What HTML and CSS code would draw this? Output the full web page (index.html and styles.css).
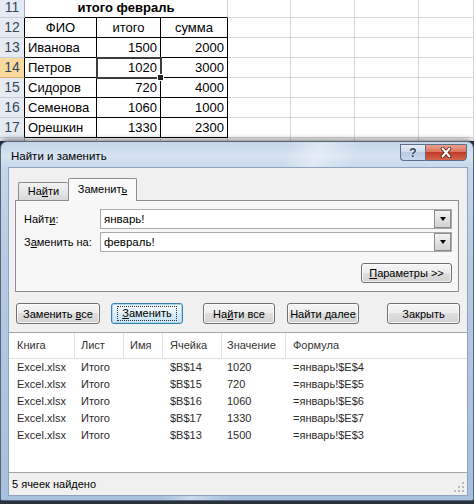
FILE: index.html
```html
<!DOCTYPE html>
<html lang="ru">
<head>
  <meta charset="UTF-8"/>
  <title>Найти и заменить</title>
  <link rel="stylesheet" href="styles.css">
</head>
<body>

<div class="sheet">
  <div class="grid">
    <div class="rh">11</div><div class="head-cell">итого февраль</div><div></div><div></div><div></div><div></div>
    <div class="rh edge">12</div><div class="t c">ФИО</div><div class="t c">итого</div><div class="t c">сумма</div><div></div><div></div><div></div><div></div>
    <div class="rh edge">13</div><div class="t">Иванова</div><div class="t n">1500</div><div class="t n">2000</div><div></div><div></div><div></div><div></div>
    <div class="rh edge active">14</div><div class="t">Петров</div><div class="t n sel">1020</div><div class="t n">3000</div><div></div><div></div><div></div><div></div>
    <div class="rh edge">15</div><div class="t">Сидоров</div><div class="t n">720</div><div class="t n">4000</div><div></div><div></div><div></div><div></div>
    <div class="rh edge">16</div><div class="t">Семенова</div><div class="t n">1060</div><div class="t n">1000</div><div></div><div></div><div></div><div></div>
    <div class="rh edge">17</div><div class="t">Орешкин</div><div class="t n">1330</div><div class="t n">2300</div><div></div><div></div><div></div><div></div>
    <div class="rh"></div><div></div><div></div><div></div><div></div><div></div><div></div><div></div>
  </div>
</div>

<div class="window">
  <div class="titlebar">
    <span class="title">Найти и заменить</span>
    <div class="caption-btns">
      <span class="cap help">?</span>
      <span class="cap close">
        <svg width="14" height="11" viewBox="0 0 14 11">
          <path d="M3.5 1.5 L10.5 9.5 M10.5 1.5 L3.5 9.5" stroke="#5a231a" stroke-width="3.6" stroke-linecap="round"/>
          <path d="M3.5 1.5 L10.5 9.5 M10.5 1.5 L3.5 9.5" stroke="#fff" stroke-width="2" stroke-linecap="round"/>
        </svg>
      </span>
    </div>
  </div>

  <div class="client">
    <div class="tabs">
      <span class="tab tab-find">На<u>й</u>ти</span>
      <span class="tab tab-replace active">Заменит<u>ь</u></span>
    </div>

    <div class="panel">
      <div class="field">
        <label>Найт<u>и</u>:</label>
        <div class="combo"><span class="txt">январь!</span><i class="drop"></i></div>
      </div>
      <div class="field">
        <label>З<u>а</u>менить на:</label>
        <div class="combo"><span class="txt">февраль!</span><i class="drop"></i></div>
      </div>
      <div class="opts">
        <button class="btn btn-opts"><u>П</u>араметры &gt;&gt;</button>
      </div>
    </div>

    <div class="actions">
      <button class="btn b-all">Заменить <u>в</u>се</button>
      <button class="btn b-replace default"><span class="focus"><u>З</u>аменить</span></button>
      <button class="btn b-findall">На<u>й</u>ти все</button>
      <button class="btn b-next">Найти <u>д</u>алее</button>
      <button class="btn b-close">Закрыть</button>
    </div>

    <div class="results">
      <div class="res-row res-head">
        <span>Книга</span><span>Лист</span><span>Имя</span><span>Ячейка</span><span>Значение</span><span>Формула</span>
      </div>
      <div class="res-row"><span>Excel.xlsx</span><span>Итого</span><span></span><span>$B$14</span><span>1020</span><span>=январь!$E$4</span></div>
      <div class="res-row"><span>Excel.xlsx</span><span>Итого</span><span></span><span>$B$15</span><span>720</span><span>=январь!$E$5</span></div>
      <div class="res-row"><span>Excel.xlsx</span><span>Итого</span><span></span><span>$B$16</span><span>1060</span><span>=январь!$E$6</span></div>
      <div class="res-row"><span>Excel.xlsx</span><span>Итого</span><span></span><span>$B$17</span><span>1330</span><span>=январь!$E$7</span></div>
      <div class="res-row"><span>Excel.xlsx</span><span>Итого</span><span></span><span>$B$13</span><span>1500</span><span>=январь!$E$3</span></div>
    </div>

    <div class="status">
      <span>5 ячеек найдено</span>
      <svg class="grip" width="11" height="11" viewBox="0 0 11 11">
        <rect x="8" y="0" width="2" height="2" fill="#b8b8b8"/>
        <rect x="4" y="4" width="2" height="2" fill="#b8b8b8"/>
        <rect x="8" y="4" width="2" height="2" fill="#b8b8b8"/>
        <rect x="0" y="8" width="2" height="2" fill="#b8b8b8"/>
        <rect x="4" y="8" width="2" height="2" fill="#b8b8b8"/>
        <rect x="8" y="8" width="2" height="2" fill="#b8b8b8"/>
      </svg>
    </div>
  </div>
</div>

</body>
</html>
```

FILE: styles.css
```css
body {
  margin: 0;
  width: 474px;
  height: 504px;
  overflow: hidden;
  background-color: #2e343c;
  font-family: "Liberation Sans", Arial, sans-serif;
}

/* spreadsheet behind the dialog */

.sheet {
  height: 141px;
  overflow: hidden;
  background-color: #fff;
}

.grid {
  display: grid;
  grid-template-columns: 25px 72px 64px 67px 63px 64px 64px 55px;
  grid-auto-rows: 20px;
  margin-top: -2px;
  font-size: 13px;
  color: #000;
}

.grid > div {
  box-sizing: border-box;
  border-right: 1px solid #d6d6d6;
  border-bottom: 1px solid #d6d6d6;
  padding: 0 3px;
  line-height: 19px;
  white-space: nowrap;
}

.grid .rh {
  padding: 0;
  text-align: center;
  font-size: 14px;
  color: #34465e;
  background-color: #e6ebf2;
  border-right-color: #9aabc2;
  border-bottom-color: #c3ccd8;
}

.grid .rh.edge {
  border-right-color: #000;
}

.grid .rh.active {
  background-color: #f9d99e;
  border-bottom-color: #d9ae62;
}

.grid .head-cell {
  grid-column: span 3;
  text-align: center;
  font-weight: bold;
  border-bottom-color: #000;
}

.grid .t {
  border-right-color: #000;
  border-bottom-color: #000;
}

.grid .c {
  text-align: center;
}

.grid .n {
  text-align: right;
}

.grid .sel {
  position: relative;
  outline: 2px solid #3c3c3c;
  outline-offset: -1px;
}

.grid .sel::after {
  content: "";
  position: absolute;
  right: -4px;
  bottom: -4px;
  width: 5px;
  height: 5px;
  background-color: #222;
  border: 1px solid #fff;
}

/* dialog window */

.window {
  position: relative;
  box-sizing: border-box;
  height: 360px;
  display: flex;
  flex-direction: column;
  padding: 0 6px 5px 8px;
  border: 1px solid #56657a;
  border-radius: 7px 7px 2px 2px;
  background:
    linear-gradient(110deg, rgba(255,255,255,0) 48%, rgba(255,255,255,0.4) 53%, rgba(255,255,255,0) 60%),
    linear-gradient(180deg, #c3d5e9 0, #d6e3f1 14px, #c4d6ea 28px, #b5cbe3 120px, #a6c0dd 100%);
  box-shadow: 0 -2px 5px rgba(0, 0, 0, 0.45);
}

.titlebar {
  height: 26px;
  display: flex;
  align-items: flex-start;
}

.title {
  flex: 1;
  padding: 8px 0 0 2px;
  font-size: 11.5px;
  color: #000;
}

.caption-btns {
  display: flex;
  margin-top: 2px;
}

.cap {
  box-sizing: border-box;
  height: 17px;
  display: flex;
  align-items: center;
  justify-content: center;
  border: 1px solid #5d6f88;
}

.help {
  width: 25px;
  border-right: none;
  border-radius: 0 0 0 4px;
  background: linear-gradient(180deg, #e4edf7 0, #cfdcec 50%, #b9cbe1 50%, #c8d8ea 100%);
  color: #2f3f56;
  font-size: 12px;
  font-weight: bold;
  text-shadow: 0 0 2px #fff;
}

.close {
  width: 42px;
  border-radius: 0 0 4px 0;
  background: linear-gradient(180deg, #e9a08b 0, #d9705a 50%, #c23d28 50%, #d2654c 100%);
}

.client {
  height: 327px;
  display: flex;
  flex-direction: column;
  background-color: #f0f0f0;
  box-shadow: 0 0 0 1px #8ea3bd;
  font-size: 11px;
  color: #000;
}

/* tabs */

.tabs {
  display: flex;
  align-items: flex-end;
  height: 22px;
  margin: 10px 0 0 9px;
}

.tab {
  box-sizing: border-box;
  height: 18px;
  line-height: 17px;
  text-align: center;
  border: 1px solid #898c95;
  border-bottom: none;
  border-radius: 2px 2px 0 0;
  background: linear-gradient(180deg, #f2f2f2 0, #e6e6e6 50%, #d8d8d8 100%);
}

.tab-find {
  width: 50px;
  border-right: none;
}

.tab-replace {
  width: 69px;
}

.tab.active {
  position: relative;
  z-index: 1;
  height: 23px;
  line-height: 21px;
  margin-bottom: -1px;
  background: #f9f9f9;
}

.panel {
  box-sizing: border-box;
  height: 92px;
  margin: 0 8px 0 6px;
  padding: 8px 6px 0 8px;
  border: 1px solid #898c95;
  background-color: #f7f7f7;
}

.field {
  display: flex;
  align-items: center;
  height: 20px;
}

.field + .field {
  margin-top: 3px;
}

.field label {
  width: 76px;
}

.combo {
  flex: 1;
  box-sizing: border-box;
  height: 20px;
  display: flex;
  align-items: center;
  padding-left: 3px;
  border: 1px solid #a6a9b0;
  background-color: #fff;
  font-size: 11.5px;
}

.combo .txt {
  flex: 1;
}

.drop {
  box-sizing: border-box;
  width: 17px;
  height: 18px;
  display: flex;
  align-items: center;
  justify-content: center;
  border: 1px solid #8c8c8c;
  background: linear-gradient(180deg, #f4f4f4 0, #e2e2e2 50%, #d2d2d2 100%);
}

.drop::before {
  content: "";
  border-left: 3.5px solid transparent;
  border-right: 3.5px solid transparent;
  border-top: 4px solid #000;
}

.opts {
  display: flex;
  justify-content: flex-end;
  margin-top: 11px;
}

/* buttons */

.btn {
  box-sizing: border-box;
  height: 21px;
  padding: 0;
  border: 1px solid #707070;
  border-radius: 3px;
  background: linear-gradient(180deg, #f6f6f6 0, #ececec 50%, #dedede 50%, #d2d2d2 100%);
  box-shadow: inset 0 0 0 1px rgba(255, 255, 255, 0.75);
  font-family: "Liberation Sans", Arial, sans-serif;
  font-size: 11px;
  color: #000;
}

.btn-opts {
  width: 91px;
  height: 20px;
}

.actions {
  display: flex;
  margin: 11px 0 0 7px;
}

.b-all { width: 84px; }
.b-replace { width: 72px; margin-left: 11px; }
.b-findall { width: 72px; margin-left: 20px; }
.b-next { width: 72px; margin-left: 12px; }
.b-close { width: 73px; margin-left: 28px; }

.btn.default {
  border-color: #3c7fb1;
  background: linear-gradient(180deg, #f3f9fd 0, #e6f3fb 50%, #d6ebf8 50%, #cbe5f6 100%);
  box-shadow: inset 0 0 0 1px #a8d8f2;
  display: flex;
  align-items: center;
  justify-content: center;
}

.focus {
  padding: 0 4px;
  line-height: 13px;
  outline: 1px dotted #333;
}

/* results list */

.results {
  box-sizing: border-box;
  height: 141px;
  margin-top: 8px;
  border-top: 1px solid #a0a5ad;
  border-bottom: 1px solid #a0a5ad;
  background-color: #fff;
  color: #2b2b2b;
}

.res-row {
  display: grid;
  grid-template-columns: 66px 49px 39px 59px 64px 1fr;
  height: 17px;
  line-height: 17px;
}

.res-row span {
  padding-left: 6px;
  white-space: nowrap;
}

.res-row span:first-child {
  padding-left: 8px;
}

.res-row span:nth-child(4),
.res-row span:nth-child(6) {
  padding-left: 7px;
}

.res-row span:nth-child(5) {
  padding-left: 5px;
}

.res-head {
  box-sizing: border-box;
  height: 26px;
  line-height: 25px;
  border-bottom: 1px solid #e2e2e2;
  color: #333;
}

.res-head span {
  border-right: 1px solid #e3e3e3;
}

.res-head span:last-child {
  border-right: none;
}

.status {
  flex: 1;
  display: flex;
  align-items: center;
  padding-left: 3px;
  font-size: 11px;
}

.status span {
  flex: 1;
}

.grip {
  align-self: flex-end;
  margin: 0 2px 2px 0;
}
```
